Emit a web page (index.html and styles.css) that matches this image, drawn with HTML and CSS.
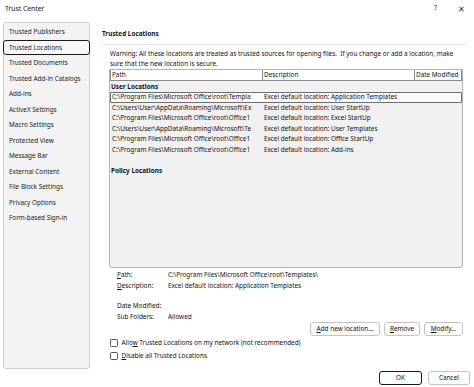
FILE: index.html
```html
<!DOCTYPE html>
<html>
<head>
<meta charset="utf-8">
<link rel="stylesheet" href="styles.css">
</head>
<body>
<div class="window">
  <div class="titlebar">
    <span class="title">Trust Center</span>
    <span class="tb-btns"><span class="help">?</span><span class="close">✕</span></span>
  </div>
  <div class="content">
    <nav class="nav">
      <div class="nav-item">Trusted Publishers</div>
      <div class="nav-item selected">Trusted Locations</div>
      <div class="nav-item">Trusted Documents</div>
      <div class="nav-item">Trusted Add-in Catalogs</div>
      <div class="nav-item">Add-ins</div>
      <div class="nav-item">ActiveX Settings</div>
      <div class="nav-item">Macro Settings</div>
      <div class="nav-item">Protected View</div>
      <div class="nav-item">Message Bar</div>
      <div class="nav-item">External Content</div>
      <div class="nav-item">File Block Settings</div>
      <div class="nav-item">Privacy Options</div>
      <div class="nav-item">Form-based Sign-in</div>
    </nav>
    <main class="main">
      <div class="heading">Trusted Locations</div>
      <div class="panel">
        <p class="warning">Warning: All these locations are treated as trusted sources for opening files.&nbsp; If you change or add a location, make sure that the new location is secure.</p>
        <div class="listbox">
          <div class="lb-header">
            <div class="hcell c-path">Path</div>
            <div class="hcell c-desc">Description</div>
            <div class="hcell c-date">Date Modified</div>
          </div>
          <div class="group">User Locations</div>
          <div class="row sel"><span class="c-path">C:\Program Files\Microsoft Office\root\Templa</span><span class="c-desc">Excel default location: Application Templates</span></div>
          <div class="row"><span class="c-path">C:\Users\User\AppData\Roaming\Microsoft\Ex</span><span class="c-desc">Excel default location: User StartUp</span></div>
          <div class="row"><span class="c-path">C:\Program Files\Microsoft Office\root\Office1</span><span class="c-desc">Excel default location: Excel StartUp</span></div>
          <div class="row"><span class="c-path">C:\Users\User\AppData\Roaming\Microsoft\Te</span><span class="c-desc">Excel default location: User Templates</span></div>
          <div class="row"><span class="c-path">C:\Program Files\Microsoft Office\root\Office1</span><span class="c-desc">Excel default location: Office StartUp</span></div>
          <div class="row"><span class="c-path">C:\Program Files\Microsoft Office\root\Office1</span><span class="c-desc">Excel default location: Add-ins</span></div>
          <div class="group policy">Policy Locations</div>
        </div>
        <div class="details">
          <div class="drow"><span class="dlabel"><u>P</u>ath:</span><span>C:\Program Files\Microsoft Office\root\Templates\</span></div>
          <div class="drow"><span class="dlabel"><u>D</u>escription:</span><span>Excel default location: Application Templates</span></div>
          <div class="drow gap"><span class="dlabel">Date Modified:</span><span></span></div>
          <div class="drow"><span class="dlabel">Sub Folders:</span><span>Allowed</span></div>
        </div>
        <div class="actions">
          <button class="btn b-add"><u>A</u>dd new location...</button>
          <button class="btn b-rem"><u>R</u>emove</button>
          <button class="btn b-mod"><u>M</u>odify...</button>
        </div>
        <label class="check"><span class="box"></span><span>Allo<u>w</u> Trusted Locations on my network (not recommended)</span></label>
        <label class="check"><span class="box"></span><span><u>D</u>isable all Trusted Locations</span></label>
      </div>
    </main>
  </div>
  <div class="footer">
    <button class="btn ok">OK</button>
    <button class="btn cancel">Cancel</button>
  </div>
</div>
</body>
</html>
```

FILE: styles.css
```css
* { box-sizing: border-box; }
html, body { margin: 0; padding: 0; background: #ffffff; }
body {
  font-family: "Noto Sans", "Open Sans", sans-serif;
  font-size: 6.4px;
  color: #111;
  width: 474px;
  height: 387px;
  overflow: hidden;
}
.window { width: 474px; height: 387px; display: flex; flex-direction: column; }
.titlebar {
  height: 17px;
  flex: none;
  display: flex;
  align-items: center;
  justify-content: space-between;
  padding: 0 9px 0 5px;
  font-size: 6.8px;
}
.tb-btns { display: flex; gap: 21px; color: #333; }
.help { font-size: 7px; }
.close { font-size: 8px; }
.content { display: flex; flex: 1; min-height: 0; }
.nav {
  margin: 5px 0 0 3px;
  width: 87px;
  height: 347px;
  background: #f3f3f3;
  border: 1px solid #cfcfcf;
  border-radius: 3px;
  padding-top: 1px;
}
.nav-item {
  height: 15.5px;
  line-height: 15.5px;
  padding-left: 5px;
  color: #222;
  white-space: nowrap;
}
.nav-item.selected {
  border: 1.3px solid #1c1c1c;
  border-radius: 3px;
  margin: 0 -1px;
  padding-left: 5px;
  line-height: 13px;
  background: #f7f7f7;
}
.main { flex: 1; padding: 0 8px 0 12px; }
.heading {
  font-weight: bold;
  height: 22px;
  line-height: 22px;
  border-bottom: 1px solid #e8e8e8;
  margin-top: 6px;
}
.panel { padding-left: 7px; padding-right: 3px; }
.warning { margin: 4px 0 0 1px; line-height: 10px; }
.listbox {
  margin-top: 0;
  height: 199px;
  background: #f1f1f1;
  border: 1px solid #b5b5b5;
  border-radius: 0 0 3px 3px;
}
.lb-header { display: flex; height: 11px; background: #fff; }
.hcell {
  border: 1px solid #8a8a8a;
  border-top: 0;
  line-height: 10px;
  padding-left: 1px;
  white-space: nowrap;
  overflow: hidden;
}
.hcell + .hcell { border-left: 0; }
.c-path { width: 153px; flex: none; }
.c-desc { width: 152px; flex: none; }
.c-date { flex: 1; }
.group { font-weight: bold; line-height: 10px; margin-top: 1px; padding-left: 1px; }
.group.policy { margin-top: 11px; }
.row {
  display: flex;
  height: 10.5px;
  line-height: 8.5px;
  padding-left: 1px;
  white-space: nowrap;
  overflow: hidden;
  border: 1px solid transparent;
}
.row span { overflow: hidden; }
.row .c-path { width: 152px; }
.row.sel { border-color: #6e6e6e; background: #fafafa; border-radius: 1px; }
.details { padding: 2px 0 0 8px; }
.drow { display: flex; line-height: 10.6px; }
.drow.gap { margin-top: 10px; }
.dlabel { width: 51px; flex: none; }
.actions {
  display: flex;
  justify-content: flex-end;
  gap: 4px;
  margin-top: 0;
}
.btn {
  font-family: inherit;
  font-size: 6.4px;
  color: #111;
  background: #fdfdfd;
  border: 1px solid #c4c4c4;
  border-radius: 3px;
  height: 14px;
  padding: 0 5px;
  line-height: 12px;
}
.b-add { width: 70px; }
.b-rem { width: 36px; }
.b-mod { width: 39px; }
.check {
  display: flex;
  align-items: center;
  height: 13px;
  gap: 4px;
  margin-left: 1px;
}
.check .box {
  width: 7.5px;
  height: 7.5px;
  border: 1px solid #555;
  border-radius: 1.5px;
  background: #fff;
  flex: none;
}
.footer {
  flex: none;
  display: flex;
  justify-content: flex-end;
  gap: 6px;
  padding: 2px 4px 0 0;
  height: 18px;
}
.btn.ok { width: 43px; border: 1.3px solid #1c1c1c; }
.btn.cancel { width: 42px; }
```
